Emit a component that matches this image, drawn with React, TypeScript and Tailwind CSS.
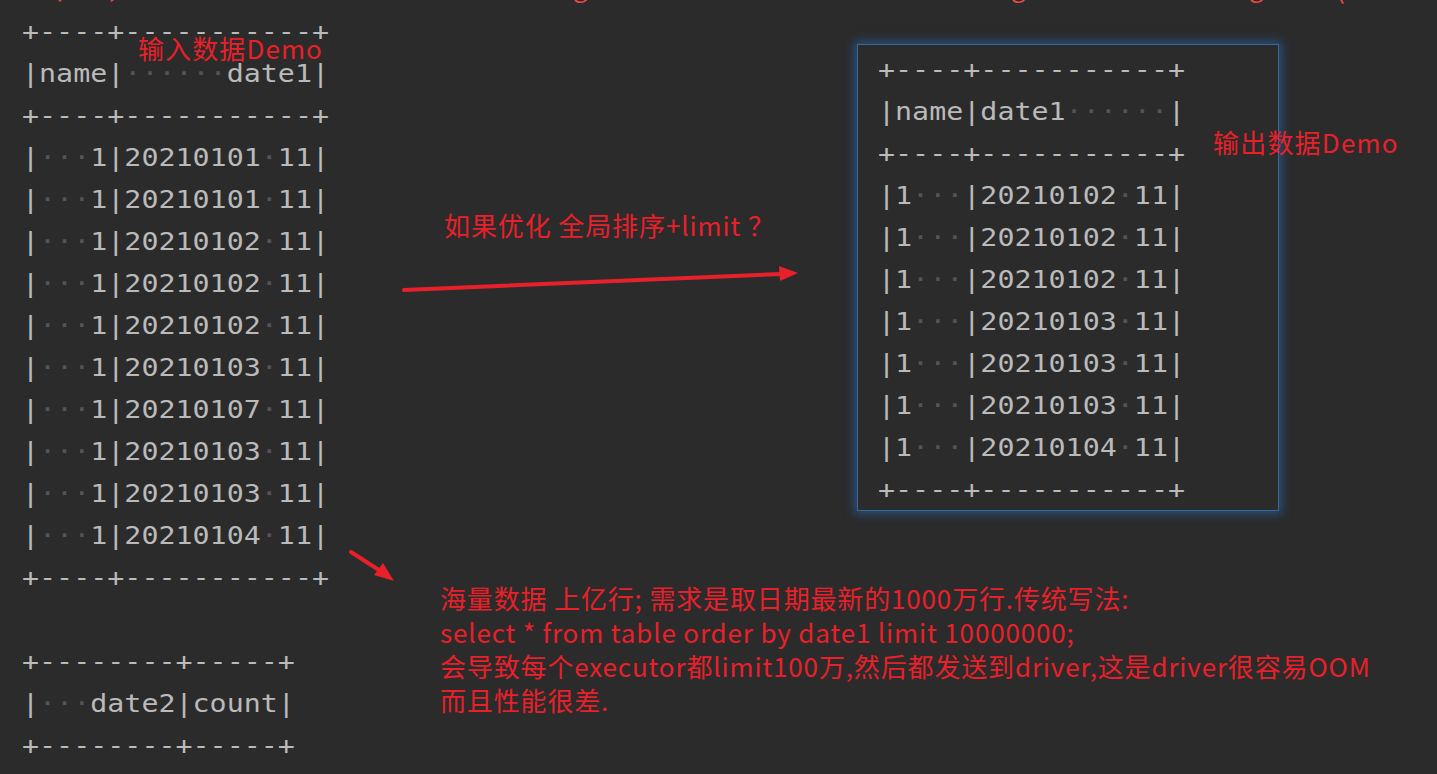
import React from "react";

const leftLines = [
  "+----+-----------+",
  "|name|······date1|",
  "+----+-----------+",
  "|···1|20210101·11|",
  "|···1|20210101·11|",
  "|···1|20210102·11|",
  "|···1|20210102·11|",
  "|···1|20210102·11|",
  "|···1|20210103·11|",
  "|···1|20210107·11|",
  "|···1|20210103·11|",
  "|···1|20210103·11|",
  "|···1|20210104·11|",
  "+----+-----------+",
  " ",
  "+--------+-----+",
  "|···date2|count|",
  "+--------+-----+",
];

const rightLines = [
  "+----+-----------+",
  "|name|date1······|",
  "+----+-----------+",
  "|1···|20210102·11|",
  "|1···|20210102·11|",
  "|1···|20210102·11|",
  "|1···|20210103·11|",
  "|1···|20210103·11|",
  "|1···|20210103·11|",
  "|1···|20210104·11|",
  "+----+-----------+",
];

function MonoLine({ text }: { text: string }) {
  return (
    <div className="h-[42px] leading-[42px] whitespace-pre">
      {[...text].map((c, i) =>
        c === "·" ? (
          <span key={i} className="text-[#555555]">
            ·
          </span>
        ) : (
          <span key={i}>{c}</span>
        )
      )}
    </div>
  );
}

const red = "text-[#e8202a]";
const cjk = "font-['Noto_Sans_CJK_SC',sans-serif]";

export default function App() {
  return (
    <div className="relative w-[1437px] h-[774px] overflow-hidden bg-[#2b2b2b]">
      {/* clipped previous line of annotation text */}
      <div className={`relative h-[10px] overflow-hidden ${cjk} text-[26px] leading-[26px] text-[#ec4a4a]`}>
        <span className="absolute left-[57px] top-[-27px]">,</span>
        <span className="absolute left-[109px] top-[-27px]">,</span>
        <span className="absolute left-[573px] top-[-27px]">g</span>
        <span className="absolute left-[1011px] top-[-27px]">g</span>
        <span className="absolute left-[1249px] top-[-27px]">g</span>
        <span className="absolute left-[1336px] top-[-25px]">(</span>
      </div>

      <div className="flex font-['DejaVu_Sans_Mono',monospace] text-[24px] text-[#bababa]">
        <div className="w-[857px] shrink-0 pl-[22px] pt-[1px]">
          <div className="origin-left scale-x-[1.18]">
            {leftLines.map((l, i) => (
              <MonoLine key={i} text={l} />
            ))}
          </div>
        </div>
        <div className="mt-[34px] w-[422px] h-[467px] shrink-0 border border-[#3a679a] shadow-[0_0_9px_3px_rgba(40,90,150,0.75)] pl-[20px] pt-[4px]">
          <div className="origin-left scale-x-[1.18]">
            {rightLines.map((l, i) => (
              <MonoLine key={i} text={l} />
            ))}
          </div>
        </div>
      </div>

      {/* annotations */}
      <div className={`absolute left-[138px] top-[33px] ${cjk} ${red} text-[26px] leading-[30px] tracking-[1.1px]`}>
        输入数据Demo
      </div>
      <div className={`absolute left-[1213px] top-[127px] ${cjk} ${red} text-[26px] leading-[30px] tracking-[1.2px]`}>
        输出数据Demo
      </div>
      <div className={`absolute left-[444px] top-[210px] ${cjk} ${red} text-[26px] leading-[30px] tracking-[0.9px]`}>
        如果优化 全局排序+limit ？
      </div>
      <div className={`absolute left-[440px] top-[581px] ${cjk} ${red} text-[26px] leading-[34px] tracking-[0.85px]`}>
        <div>海量数据 上亿行; 需求是取日期最新的1000万行.传统写法:</div>
        <div>select * from table order by date1 limit 10000000;</div>
        <div>会导致每个executor都limit100万,然后都发送到driver,这是driver很容易OOM</div>
        <div>而且性能很差.</div>
      </div>

      {/* arrows */}
      <svg className="absolute left-0 top-0" width="1437" height="774" viewBox="0 0 1437 774">
        <line x1="404" y1="290" x2="782" y2="274" stroke="#e8202a" strokeWidth="4" strokeLinecap="round" />
        <polygon points="798,273 779,266 780,281" fill="#e8202a" />
        <line x1="351" y1="552" x2="382" y2="572" stroke="#e8202a" strokeWidth="4" strokeLinecap="round" />
        <polygon points="394,581 374,575 383,563" fill="#e8202a" />
      </svg>
    </div>
  );
}
